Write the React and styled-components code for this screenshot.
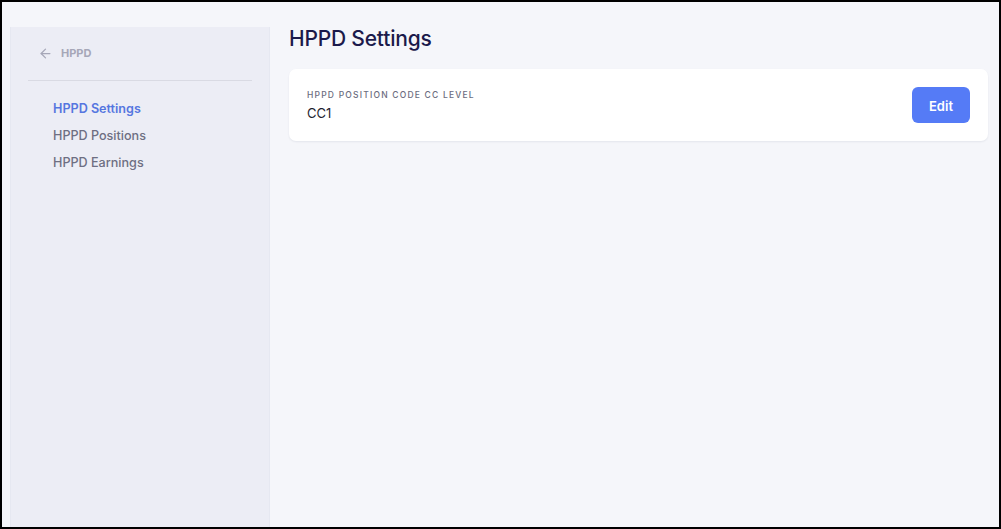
import React from 'react';
import styled, { createGlobalStyle } from 'styled-components';

const GlobalStyle = createGlobalStyle`
    html, body {
        margin: 0;
        padding: 0;
        background: #000;
    }
    body {
        font-family: Inter, "Noto Sans", "Liberation Sans", sans-serif;
        -webkit-font-smoothing: antialiased;
    }
`;

const Frame = styled.div`
    width: 1001px;
    height: 529px;
    box-sizing: border-box;
    border: 2px solid #000;
    background: #F5F6FA;
    display: flex;
    overflow: hidden;
`;

const Sidebar = styled.aside`
    width: 260px;
    margin: 25px 0 0 8px;
    background: #ECEDF5;
    border-left: 1px solid #E6E8F1;
    border-right: 1px solid #E6E8F1;
    box-sizing: border-box;
    padding: 0 17px 0 17px;
    flex-shrink: 0;
`;

const BackRow = styled.div`
    display: flex;
    align-items: center;
    gap: 8px;
    height: 52px;
    padding: 0 0 1px 10px;
    border-bottom: 1px solid #D9DAE3;
    color: #A6A7B8;
    font-size: 11px;
    font-weight: 700;
`;

const NavList = styled.nav`
    display: flex;
    flex-direction: column;
    padding: 18px 0 0 25px;
`;

const NavItem = styled.a`
    display: block;
    height: 27px;
    line-height: 20px;
    font-size: 12.6px;
    font-weight: ${p => (p.active ? 600 : 500)};
    color: ${p => (p.active ? '#5576E0' : '#6E6F82')};
    text-decoration: none;
    cursor: pointer;
`;

const Main = styled.main`
    flex: 1;
    padding: 23px 11px 0 19px;
`;

const Title = styled.h1`
    margin: 0 0 16px 0;
    font-size: 21px;
    line-height: 28px;
    font-weight: 500;
    color: #1B1A4B;
    letter-spacing: -0.2px;
`;

const Card = styled.section`
    height: 72px;
    background: #fff;
    border-radius: 7px;
    box-shadow: 0 1px 2px rgba(30, 35, 80, 0.08);
    display: flex;
    align-items: center;
    justify-content: space-between;
    padding: 0 18px;
    box-sizing: border-box;
`;

const Field = styled.div`
    display: flex;
    flex-direction: column;
    gap: 5px;
    margin-top: 1px;
`;

const Label = styled.span`
    font-size: 8.5px;
    letter-spacing: 1.2px;
    font-weight: 500;
    color: #6B6C7E;
    text-transform: uppercase;
`;

const Value = styled.span`
    font-size: 13px;
    color: #1E1E30;
`;

const EditBtn = styled.button`
    width: 58px;
    height: 36px;
    padding: 2px 0 0;
    border: 0;
    border-radius: 6px;
    background: #557BF6;
    color: #fff;
    font-family: inherit;
    font-size: 13px;
    font-weight: 600;
    cursor: pointer;
`;

const ArrowLeft = () => (
    <svg width="15" height="15" viewBox="0 0 24 24" fill="none" stroke="#A6A7B8" strokeWidth="2" strokeLinecap="round" strokeLinejoin="round">
        <path d="M19 12H5" />
        <path d="M12 19l-7-7 7-7" />
    </svg>
);

const links = ['HPPD Settings', 'HPPD Positions', 'HPPD Earnings'];

export default function App() {
    return (
        <>
            <GlobalStyle />
            <Frame>
                <Sidebar>
                    <BackRow>
                        <ArrowLeft />
                        <span>HPPD</span>
                    </BackRow>
                    <NavList>
                        {links.map((l, i) => (
                            <NavItem key={l} active={i === 0}>{l}</NavItem>
                        ))}
                    </NavList>
                </Sidebar>
                <Main>
                    <Title>HPPD Settings</Title>
                    <Card>
                        <Field>
                            <Label>HPPD Position Code CC Level</Label>
                            <Value>CC1</Value>
                        </Field>
                        <EditBtn>Edit</EditBtn>
                    </Card>
                </Main>
            </Frame>
        </>
    );
}
